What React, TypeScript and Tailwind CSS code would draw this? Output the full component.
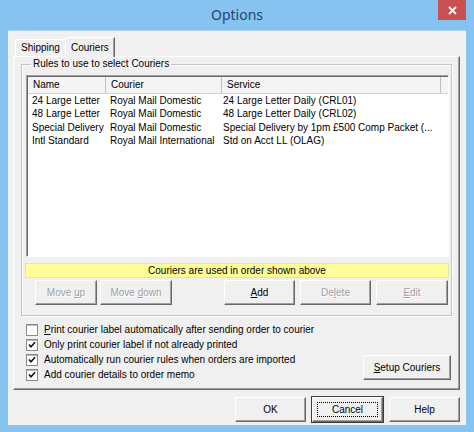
import type { ReactNode } from "react";

const rules = [
  { name: "24 Large Letter", courier: "Royal Mail Domestic", service: "24 Large Letter Daily (CRL01)" },
  { name: "48 Large Letter", courier: "Royal Mail Domestic", service: "48 Large Letter Daily (CRL02)" },
  { name: "Special Delivery", courier: "Royal Mail Domestic", service: "Special Delivery by 1pm £500 Comp Packet (..." },
  { name: "Intl Standard", courier: "Royal Mail International", service: "Std on Acct LL (OLAG)" },
];

function Btn({ children, w, disabled, focused }: { children: ReactNode; w: string; disabled?: boolean; focused?: boolean }) {
  return (
    <div
      className={`${w} h-[25px] flex items-center justify-center bg-[#f0f0f0] border border-t-white border-l-white border-r-[#696969] border-b-[#696969] shadow-[inset_-1px_-1px_0_#a0a0a0] ${
        disabled ? "text-[#a0a0a0] [text-shadow:1px_1px_0_#fff]" : "text-black"
      } ${focused ? "outline outline-1 outline-[#3c3c3c]" : ""}`}
    >
      {focused ? (
        <span className="w-[calc(100%-8px)] h-[calc(100%-8px)] border border-dotted border-black flex items-center justify-center">
          {children}
        </span>
      ) : (
        children
      )}
    </div>
  );
}

function Check({ checked, children }: { checked: boolean; children: ReactNode }) {
  return (
    <div className="h-[15px] flex items-center gap-[6px]">
      <svg width="12" height="12" viewBox="0 0 12 12">
        <rect x="0.5" y="0.5" width="11" height="11" fill="#fff" stroke="#8a8a8a" />
        <path d="M1 1.5H11" stroke="#b8b8b8" />
        {checked && <path d="M3 5.5l2 2.2 4-4.4" fill="none" stroke="#111" strokeWidth="1.6" />}
      </svg>
      <span>{children}</span>
    </div>
  );
}

export default function App() {
  return (
    <div className="w-[474px] h-[432px] bg-[#86c3f1] flex flex-col font-['Liberation_Sans',Arial,sans-serif] text-[10px] text-black leading-none">
      <div className="h-[30px] relative flex items-center justify-center">
        <span className="font-['Noto_Sans',sans-serif] text-[14px] text-[#244770] -mt-[1px]">Options</span>
        <div className="absolute right-[8px] top-0 w-[28px] h-[20px] bg-[#c75050] flex items-center justify-center">
          <svg width="9" height="9" viewBox="0 0 9 9">
            <path d="M1 1l7 7M8 1l-7 7" stroke="#fff" strokeWidth="1.8" />
          </svg>
        </div>
      </div>

      <div className="mx-[8px] h-[395px] bg-[#f0f0f0] pt-[6px] pl-[5px] pr-[6px] border-t border-[#a9d3f3]">
        <div className="h-[19px] flex items-end pl-[2px] relative z-10">
          <div className="h-[16px] px-[5px] flex items-center border border-b-0 border-t-white border-l-white border-r-[#a0a0a0] mb-[1px]">
            Shipping
          </div>
          <div className="h-[20px] px-[5px] pt-[1px] flex items-center bg-[#f0f0f0] border border-b-0 border-t-white border-l-white border-r-[#696969] -mb-[1px] -ml-[1px] shadow-[inset_-1px_0_0_#a0a0a0]">
            Couriers
          </div>
        </div>

        <div className="h-[334px] border border-t-white border-l-white border-r-[#696969] border-b-[#696969] shadow-[inset_-1px_-1px_0_#a0a0a0] flex flex-col">
          <fieldset className="mx-[7px] mt-[1px] h-[258px] border border-[#c5c5c5] shadow-[inset_1px_1px_0_#fff,1px_1px_0_#fff] pl-[4px] pr-[2px]">
            <legend className="ml-[5px] px-[2px] leading-[12px]">Rules to use to select Couriers</legend>
            <div className="mt-[5px] h-[182px] bg-white border border-t-[#a0a0a0] border-l-[#a0a0a0] border-r-white border-b-white shadow-[inset_1px_1px_0_#696969] pl-[1px] pt-[1px]">
              <div className="h-[17px] flex bg-[#f4f4f4] border-b border-[#d5d5d5]">
                <div className="w-[78px] pl-[5px] flex items-center border-r border-[#c0c0c0]">Name</div>
                <div className="w-[116px] pl-[5px] flex items-center border-r border-[#c0c0c0]">Courier</div>
                <div className="w-[219px] pl-[5px] flex items-center border-r border-[#c0c0c0]">Service</div>
                <div className="flex-1" />
              </div>
              <div>
                {rules.map((r) => (
                  <div key={r.name} className="h-[13.5px] flex items-center">
                    <div className="w-[78px] pl-[4px] whitespace-nowrap">{r.name}</div>
                    <div className="w-[116px] pl-[4px] whitespace-nowrap">{r.courier}</div>
                    <div className="w-[219px] pl-[1px] whitespace-nowrap overflow-hidden">{r.service}</div>
                  </div>
                ))}
              </div>
            </div>
            <div className="mt-[6px] -ml-[1px] h-[15px] bg-[#ffff99] border border-[#e6e6a0] flex items-center justify-center">
              Couriers are used in order shown above
            </div>
            <div className="mt-[2px] flex items-center">
              <div className="ml-[9px] flex gap-[3px]">
                <Btn w="w-[62px]" disabled>
                  <span>Move <u>u</u>p</span>
                </Btn>
                <Btn w="w-[72px]" disabled>
                  <span>Move <u>d</u>own</span>
                </Btn>
              </div>
              <div className="ml-auto mr-[1px] flex gap-[5px]">
                <Btn w="w-[71px]">
                  <span><u>A</u>dd</span>
                </Btn>
                <Btn w="w-[71px]" disabled>
                  <span>De<u>l</u>ete</span>
                </Btn>
                <Btn w="w-[72px]" disabled>
                  <span><u>E</u>dit</span>
                </Btn>
              </div>
            </div>
          </fieldset>

          <div className="mt-[6px] ml-[12px] mr-[8px] flex items-end">
            <div className="flex flex-col">
              <Check checked={false}>
                <u>P</u>rint courier label automatically after sending order to courier
              </Check>
              <Check checked>Only print courier label if not already printed</Check>
              <Check checked>Automatically run courier rules when orders are imported</Check>
              <Check checked>Add courier details to order memo</Check>
            </div>
            <div className="ml-auto mb-[2px]">
              <Btn w="w-[88px]">
                <span><u>S</u>etup Couriers</span>
              </Btn>
            </div>
          </div>
        </div>

        <div className="mt-[7px] flex justify-end gap-[6px]">
          <Btn w="w-[71px]">OK</Btn>
          <Btn w="w-[71px]" focused>Cancel</Btn>
          <Btn w="w-[71px]">Help</Btn>
        </div>
      </div>
    </div>
  );
}
